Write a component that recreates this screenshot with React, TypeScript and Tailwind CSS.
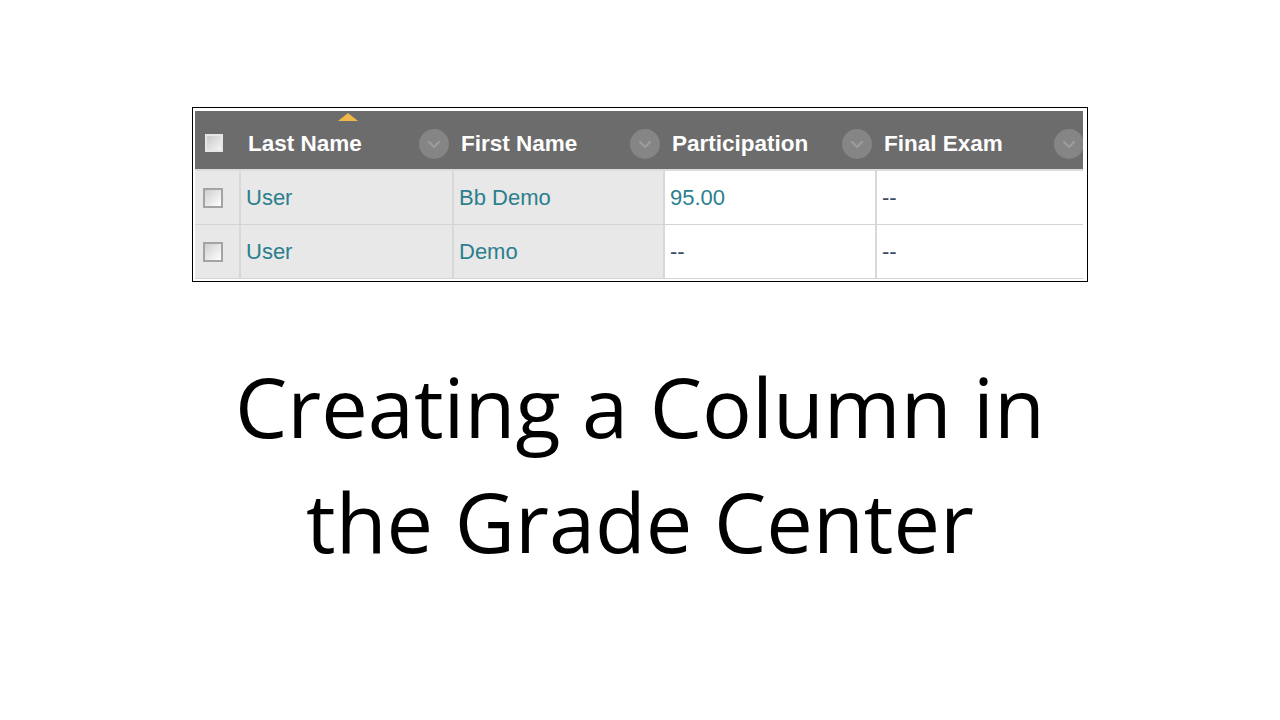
const COLS = [
  { label: "Last Name", w: "w-[213px]", shaded: true, sorted: true },
  { label: "First Name", w: "w-[211px]", shaded: true, sorted: false },
  { label: "Participation", w: "w-[212px]", shaded: false, sorted: false },
  { label: "Final Exam", w: "w-[212px]", shaded: false, sorted: false },
];

const ROWS = [
  ["User", "Bb Demo", "95.00", "--"],
  ["User", "Demo", "--", "--"],
];

function Chevron() {
  return (
    <span className="flex h-[30px] w-[30px] shrink-0 items-center justify-center rounded-full bg-[#858585]">
      <svg width="14" height="9" viewBox="0 0 14 9" fill="none">
        <path d="M2 2l5 5 5-5" stroke="#9c9c9c" strokeWidth="2.2" strokeLinecap="round" strokeLinejoin="round" />
      </svg>
    </span>
  );
}

function Box({ header }: { header?: boolean }) {
  return header ? (
    <span className="block h-[18px] w-[18px] border-2 border-[#e6e6e6] bg-gradient-to-br from-[#c9c9c9] to-[#f4f4f4]" />
  ) : (
    <span className="block h-[20px] w-[20px] border-2 border-[#a3a3a3] bg-gradient-to-br from-[#cfcfcf] to-white" />
  );
}

export default function App() {
  return (
    <div className="min-h-screen w-full bg-white pt-[107px]" style={{ fontFamily: '"Liberation Sans", Arial, sans-serif' }}>
      {/* grade center table */}
      <div className="mx-auto w-[896px] overflow-hidden border border-black pb-[2px] pl-[2px] pr-[4px] pt-[3px]">
        <div className="w-[888px] overflow-hidden">
          <div className="flex w-[1000px]">
            {/* header */}
            <div className="flex h-[58px] w-[46px] shrink-0 items-center bg-[#6c6c6c] pl-[10px] pt-[6px]">
              <Box header />
            </div>
            {COLS.map((c) => (
              <div key={c.label} className={`relative flex h-[58px] shrink-0 items-center justify-between bg-[#6c6c6c] pl-[7px] pr-[5px] pt-[8px] ${c.w}`}>
                {c.sorted && (
                  <span className="absolute left-[97px] top-[2px] h-0 w-0 border-x-[10px] border-b-[8px] border-x-transparent border-b-[#f0b848]" />
                )}
                <span className="text-[22.5px] font-bold leading-none text-white">{c.label}</span>
                <Chevron />
              </div>
            ))}
          </div>
          <div className="h-[2px] w-full bg-[#dcdcdc]" />
          {ROWS.map((r, i) => (
            <div key={i} className="flex h-[54px] border-b border-[#d4d4d4]">
              <div className="flex w-[46px] shrink-0 items-center border-r-2 border-[#d8d8d8] bg-[#e8e8e8] pl-[8px]">
                <Box />
              </div>
              {COLS.map((c, j) => (
                <div
                  key={c.label}
                  className={`flex shrink-0 items-center border-r-2 border-[#d8d8d8] pl-[5px] text-[22px] ${c.w} ${c.shaded ? "bg-[#e8e8e8]" : "bg-white"} ${r[j] === "--" ? "text-[#3b4a63]" : "text-[#2b7f8e]"}`}
                >
                  {r[j]}
                </div>
              ))}
            </div>
          ))}
        </div>
      </div>

      {/* title */}
      <h1
        className="mt-[66px] text-center text-[83px] leading-[115px] text-black"
        style={{ fontFamily: '"Open Sans", sans-serif' }}
      >
        Creating a Column in
        <br />
        the Grade Center
      </h1>
    </div>
  );
}
